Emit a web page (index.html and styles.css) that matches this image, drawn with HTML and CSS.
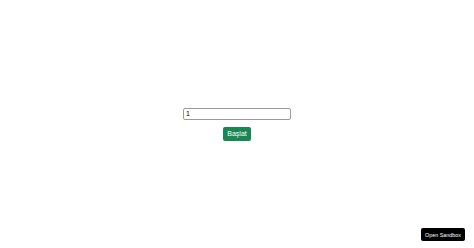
FILE: index.html
```html
<!DOCTYPE html>
<html lang="tr">
<head>
<meta charset="utf-8">
<title>Başlat</title>
<link rel="stylesheet" href="styles.css">
</head>
<body>
<main class="app">
  <input class="num-input" type="text" value="1">
  <button class="start-btn" type="button">Başlat</button>
</main>
<a class="sandbox-btn" href="#">Open Sandbox</a>
</body>
</html>
```

FILE: styles.css
```css
html, body {
  margin: 0;
  padding: 0;
  height: 100%;
  background: #ffffff;
  font-family: "Liberation Sans", Arial, sans-serif;
}

.app {
  height: 100%;
  display: flex;
  flex-direction: column;
  align-items: center;
  justify-content: center;
  gap: 7px;
}

.num-input {
  box-sizing: border-box;
  width: 108px;
  height: 12px;
  padding: 0 2px;
  border: 1px solid #9a9a9a;
  border-radius: 2px;
  font-family: "Liberation Sans", Arial, sans-serif;
  font-size: 7px;
  color: #000;
  background: #fff;
}

.start-btn {
  box-sizing: border-box;
  height: 14px;
  padding: 0 4px;
  border: none;
  border-radius: 2px;
  background: #198754;
  color: #ffffff;
  font-family: "Liberation Sans", Arial, sans-serif;
  font-size: 7px;
}

.sandbox-btn {
  position: fixed;
  right: 9px;
  bottom: 7px;
  box-sizing: border-box;
  height: 13px;
  padding: 0 4px;
  display: flex;
  align-items: center;
  background: #000000;
  color: #ffffff;
  border-radius: 2px;
  font-size: 5.4px;
  text-decoration: none;
}
```
